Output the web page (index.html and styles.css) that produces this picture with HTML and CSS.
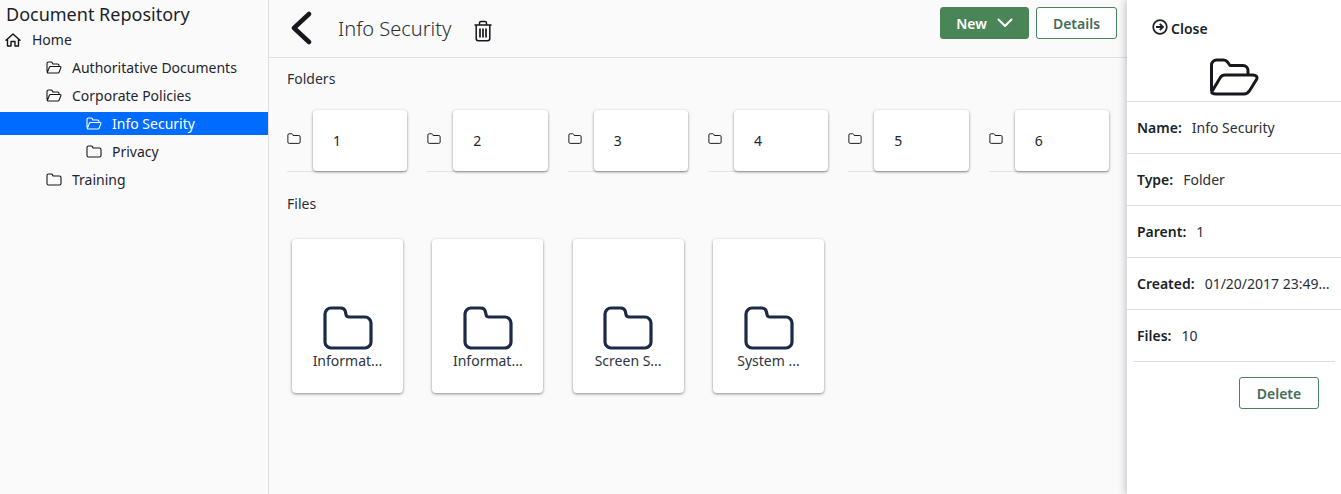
FILE: index.html
```html
<!DOCTYPE html>
<html lang="en">
<head>
<meta charset="utf-8">
<title>Document Repository</title>
<link rel="stylesheet" href="styles.css">
</head>
<body>
<svg class="defs" width="0" height="0" aria-hidden="true">
  <symbol id="folder" viewBox="0 0 16 16"><path d="M1 3.5A1.5 1.5 0 0 1 2.5 2h2.8c.6 0 1 .2 1.2.7L7 4h6.5A1.5 1.5 0 0 1 15 5.5v6a1.5 1.5 0 0 1-1.5 1.5h-11A1.5 1.5 0 0 1 1 11.5z" fill="none" stroke="currentColor" stroke-width="1.1" stroke-linejoin="round"/></symbol>
  <symbol id="folder-open" viewBox="0 0 16 16"><path d="M1 11.5v-8A1.5 1.5 0 0 1 2.5 2h2.7c.5 0 .9.3 1.1.7L6.8 4h4.7A1.5 1.5 0 0 1 13 5.5V6.5M1.3 12.6 3.4 7.3c.2-.5.6-.8 1.1-.8h9.6c.6 0 1 .6.8 1.1l-1.7 4.4c-.2.6-.7 1-1.3 1H2.2c-.6 0-1.1-.4-.9-.9z" fill="none" stroke="currentColor" stroke-width="1.1" stroke-linejoin="round"/></symbol>
</svg>
<div class="app">
  <aside class="sidebar">
    <h1 class="repo-title">Document Repository</h1>
    <ul class="tree">
      <li class="tree-row level-0">
        <svg class="tree-icon" viewBox="0 0 16 16"><path d="M2.5 14V7L8 2l5.500 5v7h-3.500v-4.500H6V14z M1 8.200 8 2l7 6.200" fill="none" stroke="currentColor" stroke-width="1.400" stroke-linejoin="round" stroke-linecap="round"/></svg>
        <span>Home</span>
      </li>
      <li class="tree-row level-1"><svg class="tree-icon"><use href="#folder-open"/></svg><span>Authoritative Documents</span></li>
      <li class="tree-row level-1"><svg class="tree-icon"><use href="#folder-open"/></svg><span>Corporate Policies</span></li>
      <li class="tree-row level-2 selected"><svg class="tree-icon"><use href="#folder-open"/></svg><span>Info Security</span></li>
      <li class="tree-row level-2"><svg class="tree-icon"><use href="#folder"/></svg><span>Privacy</span></li>
      <li class="tree-row level-1"><svg class="tree-icon"><use href="#folder"/></svg><span>Training</span></li>
    </ul>
  </aside>
  <main class="main">
    <header class="topbar">
      <svg class="back" viewBox="0 0 24 34"><path d="M20 3 5 17l15 14" fill="none" stroke="currentColor" stroke-width="4.500" stroke-linecap="round" stroke-linejoin="round"/></svg>
      <h2 class="page-title">Info Security</h2>
      <svg class="trash" viewBox="0 0 20 22"><path d="M1.500 5h17M6.500 5V3a1.500 1.500 0 0 1 1.500-1.500h4A1.500 1.500 0 0 1 13.500 3v2M3.200 5v13.500A2.200 2.200 0 0 0 5.400 20.700h9.200a2.200 2.200 0 0 0 2.200-2.200V5" fill="none" stroke="currentColor" stroke-width="1.500"/><path d="M7 8.500v9M10 8.500v9M13 8.500v9" fill="none" stroke="currentColor" stroke-width="1.700"/></svg>
      <div class="actions">
        <button class="btn btn-solid">New<svg class="chev" viewBox="0 0 16 10"><path d="M1.500 1.500 8 8l6.500-6.500" fill="none" stroke="currentColor" stroke-width="2" stroke-linecap="round" stroke-linejoin="round"/></svg></button>
        <button class="btn btn-outline btn-details">Details</button>
      </div>
    </header>
    <section class="content">
      <h3 class="section-label">Folders</h3>
      <div class="grid folders">
        <div class="folder-item"><svg class="folder-icon"><use href="#folder"/></svg><div class="card folder-card">1</div></div>
        <div class="folder-item"><svg class="folder-icon"><use href="#folder"/></svg><div class="card folder-card">2</div></div>
        <div class="folder-item"><svg class="folder-icon"><use href="#folder"/></svg><div class="card folder-card">3</div></div>
        <div class="folder-item"><svg class="folder-icon"><use href="#folder"/></svg><div class="card folder-card">4</div></div>
        <div class="folder-item"><svg class="folder-icon"><use href="#folder"/></svg><div class="card folder-card">5</div></div>
        <div class="folder-item"><svg class="folder-icon"><use href="#folder"/></svg><div class="card folder-card">6</div></div>
      </div>
      <h3 class="section-label files-label">Files</h3>
      <div class="grid files">
        <div class="card file-card"><svg class="file-icon" viewBox="0 0 50 44"><path d="M2 8a6 6 0 0 1 6-6h9.500a5 5 0 0 1 5 4l.5 2.500a3 3 0 0 0 3 2.500h16a6 6 0 0 1 6 6v19a6 6 0 0 1-6 6H8a6 6 0 0 1-6-6z" fill="none" stroke="currentColor" stroke-width="3.200"/></svg><span class="file-name">Informat...</span></div>
        <div class="card file-card"><svg class="file-icon" viewBox="0 0 50 44"><path d="M2 8a6 6 0 0 1 6-6h9.500a5 5 0 0 1 5 4l.5 2.500a3 3 0 0 0 3 2.500h16a6 6 0 0 1 6 6v19a6 6 0 0 1-6 6H8a6 6 0 0 1-6-6z" fill="none" stroke="currentColor" stroke-width="3.200"/></svg><span class="file-name">Informat...</span></div>
        <div class="card file-card"><svg class="file-icon" viewBox="0 0 50 44"><path d="M2 8a6 6 0 0 1 6-6h9.500a5 5 0 0 1 5 4l.5 2.500a3 3 0 0 0 3 2.500h16a6 6 0 0 1 6 6v19a6 6 0 0 1-6 6H8a6 6 0 0 1-6-6z" fill="none" stroke="currentColor" stroke-width="3.200"/></svg><span class="file-name">Screen S...</span></div>
        <div class="card file-card"><svg class="file-icon" viewBox="0 0 50 44"><path d="M2 8a6 6 0 0 1 6-6h9.500a5 5 0 0 1 5 4l.5 2.500a3 3 0 0 0 3 2.500h16a6 6 0 0 1 6 6v19a6 6 0 0 1-6 6H8a6 6 0 0 1-6-6z" fill="none" stroke="currentColor" stroke-width="3.200"/></svg><span class="file-name">System ...</span></div>
      </div>
    </section>
  </main>
  <aside class="details">
    <div class="close-row">
      <svg class="close-icon" viewBox="0 0 16 16"><circle cx="8" cy="8" r="6.800" fill="none" stroke="currentColor" stroke-width="1.700"/><path d="M4 8h6.500M7.800 4.800 11 8l-3.200 3.200" fill="none" stroke="currentColor" stroke-width="1.900"/></svg>
      <span>Close</span>
    </div>
    <div class="big-folder">
      <svg viewBox="0 0 50 38"><path d="M2.500 33V7a5 5 0 0 1 5-5h7a5 5 0 0 1 4 2l2.500 3.500h13a5 5 0 0 1 5 5V17M3 33.500 11 20c1-2 2.500-3 5-3h28c3 0 5 2 3.500 4.500L41 32c-1.500 2.500-3 4-6 4H7c-3 0-5-1-4-2.500z" fill="none" stroke="currentColor" stroke-width="3" stroke-linejoin="round"/></svg>
    </div>
    <div class="detail-row"><b>Name:</b><span>Info Security</span></div>
    <div class="detail-row"><b>Type:</b><span>Folder</span></div>
    <div class="detail-row"><b>Parent:</b><span>1</span></div>
    <div class="detail-row"><b>Created:</b><span class="truncate">01/20/2017 23:49:12</span></div>
    <div class="detail-row inset"><b>Files:</b><span>10</span></div>
    <div class="detail-actions"><button class="btn btn-outline btn-delete">Delete</button></div>
  </aside>
</div>
</body>
</html>
```

FILE: styles.css
```css
* { box-sizing: border-box; }
html, body { margin: 0; height: 100%; }
body {
  font-family: "Noto Sans", "Open Sans", sans-serif;
  font-size: 14px;
  color: #1f2430;
  background: #fafafa;
  overflow: hidden;
}
.defs { position: absolute; }
.app {
  display: flex;
  height: 494px;
}

/* Sidebar */
.sidebar {
  width: 269px;
  flex: none;
  border-right: 1px solid #dedede;
}
.repo-title {
  margin: 0;
  padding: 2px 0 0 6px;
  height: 28px;
  font-size: 18px;
  line-height: 24px;
  font-weight: 400;
  color: #1b1f28;
}
.tree { list-style: none; margin: 0; padding: 0; }
.tree-row {
  display: flex;
  align-items: center;
  height: 23px;
  margin-bottom: 5px;
  line-height: 23px;
}
.tree-icon { width: 16px; height: 16px; flex: none; margin-right: 10px; color: #15161a; }
.level-0 { padding-left: 5px; margin-right: 0; }
.level-0 .tree-icon { margin-right: 11px; }
.level-1 { padding-left: 46px; }
.level-2 { padding-left: 86px; }
.selected { background: #006cff; color: #fff; }
.selected .tree-icon { color: #fff; }

/* Main */
.main { flex: 1; min-width: 0; }
.topbar {
  display: flex;
  align-items: center;
  height: 58px;
  border-bottom: 1px solid #dedede;
  padding: 7px 10px 0 20px;
  align-items: flex-start;
}
.back { width: 24px; height: 34px; color: #16181d; margin-top: 4px; flex: none; }
.page-title {
  margin: 0 0 0 25px;
  font-size: 20px;
  line-height: 30px;
  font-weight: 300;
  color: #2b2f38;
  padding-top: 7px;
}
.trash { width: 20px; height: 22px; margin: 13px 0 0 22px; color: #16181d; flex: none; }
.actions { margin-left: auto; display: flex; gap: 7px; }
.btn {
  font-family: inherit;
  font-size: 14px;
  font-weight: 600;
  height: 32px;
  border-radius: 3px;
  cursor: pointer;
  padding: 0;
  display: inline-flex;
  align-items: center;
  justify-content: center;
}
.btn-solid { width: 89px; background: #4a8557; border: 1px solid #4a8557; color: #fff; }
.chev { width: 16px; height: 10px; margin-left: 10px; }
.btn-outline { background: #fff; border: 1px solid #47845a; color: #3f6f58; }
.btn-details { width: 81px; }
.content { padding: 0 18px; }
.section-label {
  margin: 0;
  padding-top: 11px;
  font-size: 14px;
  line-height: 20px;
  font-weight: 400;
  color: #2a2e38;
}
.files-label { padding-top: 22px; }
.grid { display: grid; grid-template-columns: repeat(6, 1fr); column-gap: 20px; }
.folders { margin-top: 21px; }
.folder-item {
  display: flex;
  align-items: center;
  height: 62px;
  border-bottom: 1px solid #e2e2e2;
  gap: 12px;
}
.folder-icon { width: 14px; height: 14px; flex: none; color: #15161a; margin: -4px 0 0 0; }
.card {
  background: #fff;
  border-radius: 4px;
  box-shadow: 0 1px 3px rgba(0, 0, 0, .45);
}
.folder-card {
  flex: 1;
  height: 61px;
  margin-bottom: -1px;
  padding-left: 20px;
  line-height: 62px;
  align-self: flex-start;
}
.files { margin-top: 25px; }
.file-card {
  width: 111px;
  height: 154px;
  margin-left: 5px;
  display: flex;
  flex-direction: column;
  align-items: center;
  padding-top: 67px;
}
.file-icon { width: 50px; height: 44px; color: #1c2a48; }
.file-name { line-height: 20px; margin-top: 1px; color: #2e3440; }

/* Details panel */
.details {
  width: 214px;
  flex: none;
  background: #fff;
  box-shadow: -3px 0 6px rgba(60, 64, 90, .22);
  position: relative;
}
.close-row {
  display: flex;
  align-items: center;
  height: 57px;
  padding: 0 0 2px 25px;
  font-weight: 600;
  color: #1b1f28;
  gap: 3px;
}
.close-row span { padding-top: 2px; }
.close-icon { width: 16px; height: 16px; margin-top: -2px; }
.big-folder {
  height: 45px;
  display: flex;
  justify-content: center;
  border-bottom: 1px solid #dedede;
}
.big-folder svg { width: 50px; height: 38px; color: #16181d; margin-top: 1px; }
.detail-row {
  display: flex;
  align-items: center;
  height: 52px;
  padding: 0 10px;
  border-bottom: 1px solid #dedede;
  gap: 10px;
  color: #2a2e38;
  white-space: nowrap;
}
.detail-row b { font-weight: 600; color: #1b1f28; flex: none; }
.detail-row.inset { margin: 0 6px; padding: 0 4px; }
.truncate { overflow: hidden; text-overflow: ellipsis; }
.detail-actions { display: flex; justify-content: flex-end; padding: 15px 22px 0 0; }
.btn-delete { width: 80px; }
```
